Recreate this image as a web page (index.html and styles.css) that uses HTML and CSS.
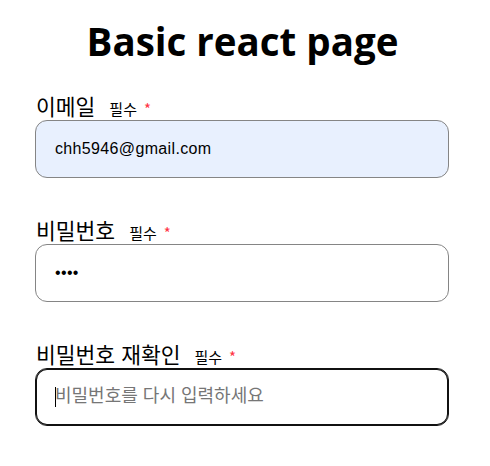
FILE: index.html
```html
<!DOCTYPE html>
<html lang="ko">
<head>
<meta charset="utf-8">
<title>Basic react page</title>
<link rel="stylesheet" href="styles.css">
</head>
<body>
<main class="page">
  <h1 class="title">Basic react page</h1>
  <form class="form">
    <div class="field">
      <div class="label-row">
        <label class="label" for="email">이메일</label>
        <span class="req">필수</span><span class="star">*</span>
      </div>
      <input id="email" class="input autofill" type="email" value="chh5946@gmail.com">
    </div>
    <div class="field">
      <div class="label-row">
        <label class="label" for="pw">비밀번호</label>
        <span class="req">필수</span><span class="star">*</span>
      </div>
      <input id="pw" class="input" type="password" value="1234">
    </div>
    <div class="field">
      <div class="label-row">
        <label class="label" for="pw2">비밀번호 재확인</label>
        <span class="req">필수</span><span class="star">*</span>
      </div>
      <div class="input-wrap">
        <input id="pw2" class="input focused" type="password" placeholder="비밀번호를 다시 입력하세요">
        <span class="caret"></span>
      </div>
    </div>
  </form>
</main>
</body>
</html>
```

FILE: styles.css
```css
html, body {
  margin: 0;
  padding: 0;
  background: #ffffff;
}

.page {
  width: 490px;
  font-family: "Noto Sans CJK KR", "Open Sans", sans-serif;
  color: #000;
}

.title {
  margin: 0;
  padding-top: 15px;
  padding-right: 5px;
  text-align: center;
  font-family: "Open Sans", "Noto Sans CJK KR", sans-serif;
  font-weight: 700;
  font-size: 38.5px;
  line-height: 52px;
}

.form {
  padding-left: 35px;
  padding-top: 27px;
  display: flex;
  flex-direction: column;
  gap: 40px;
}

.field {
  display: flex;
  flex-direction: column;
  gap: 2px;
}

.label-row {
  display: flex;
  align-items: baseline;
  height: 24px;
  padding-left: 1px;
}

.label {
  font-size: 21.5px;
  line-height: 24px;
}

.req {
  margin-left: 14px;
  font-size: 15px;
  line-height: 24px;
}

.star {
  margin-left: 7px;
  font-size: 15px;
  line-height: 24px;
  color: #ff3344;
}

.input-wrap {
  position: relative;
  width: 414px;
}

.input {
  box-sizing: border-box;
  width: 414px;
  height: 58px;
  margin: 0;
  padding: 0 19px;
  border: 1px solid #858585;
  border-radius: 12px;
  background: #ffffff;
  font-family: "Liberation Sans", "Noto Sans CJK KR", sans-serif;
  font-size: 16px;
  letter-spacing: 0.35px;
  color: #000;
  outline: none;
}

.input.autofill {
  background: #e8f0fe;
}

.input.focused {
  border-color: #111111;
  box-shadow: inset 0 0 0 1px #111111;
}

.input::placeholder {
  font-family: "Noto Sans CJK KR", sans-serif;
  color: #767676;
  font-size: 18px;
  letter-spacing: 0;
}

.caret {
  position: absolute;
  left: 20px;
  top: 19px;
  width: 1px;
  height: 20px;
  background: #000;
}
```
